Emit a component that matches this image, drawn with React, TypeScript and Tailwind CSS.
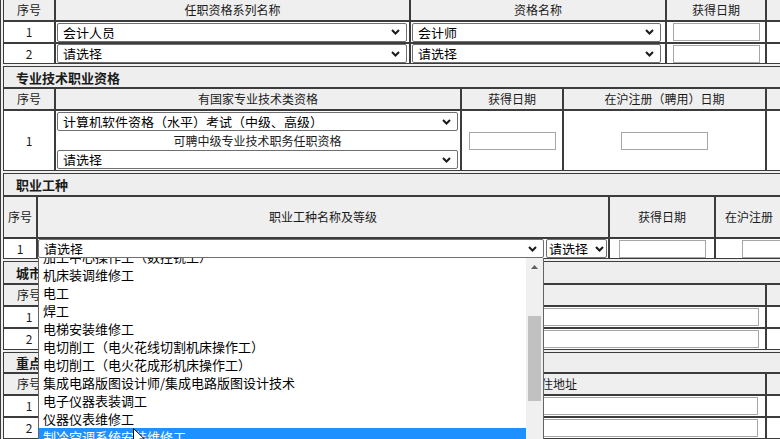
import type { ReactNode } from 'react'

const cell = 'shrink-0 flex items-center justify-center border border-[#3c3c3c] leading-none'
const head = 'bg-[#efefef] text-[12px] text-[#1a1a1a]'
const data = 'bg-white text-[12px] text-[#1a1a1a]'
const title = 'shrink-0 flex items-center justify-start border border-[#3c3c3c] bg-[#eeeeee] pl-[12px] text-[13px] font-bold text-[#1a1a1a] leading-none'

const ITEMS = [
  '加工中心操作工（数控铣工）',
  '机床装调维修工',
  '电工',
  '焊工',
  '电梯安装维修工',
  '电切削工（电火花线切割机床操作工）',
  '电切削工（电火花成形机床操作工）',
  '集成电路版图设计师/集成电路版图设计技术',
  '电子仪器表装调工',
  '仪器仪表维修工',
  '制冷空调系统安装维修工',
  '计算机维修工',
]
const SELECTED = 10

function Chevron() {
  return (
    <svg width="9" height="6" viewBox="0 0 9 6" className="shrink-0">
      <polyline points="1,1 4.5,4.5 8,1" fill="none" stroke="#1a1a1a" strokeWidth="2" />
    </svg>
  )
}

interface SelectProps {
  readonly label: string
  readonly className: string
}

function Select({ label, className }: SelectProps) {
  return (
    <div
      className={`flex h-[19px] shrink-0 items-center justify-between rounded-[2px] border border-[#6f6f6f] bg-white text-[13px] text-black ${className}`}
    >
      <span className="truncate leading-none">{label}</span>
      <Chevron />
    </div>
  )
}

function Input({ className }: { readonly className: string }) {
  return <div className={`h-[18px] shrink-0 border border-[#a6a6a6] bg-white ${className}`} />
}

function Row({ children, className = '' }: { readonly children: ReactNode; readonly className?: string }) {
  return <div className={`flex w-[877px] ${className}`}>{children}</div>
}

export default function App() {
  return (
    <div className="relative h-[439px] w-[780px] overflow-hidden border-l border-[#3c3c3c] bg-[#f0f0f0] pl-[2px] font-['Noto_Sans_CJK_SC','Noto_Sans',sans-serif] [text-spacing-trim:space-all]">
      {/* 任职资格 */}
      <div className="-mt-px">
        <Row>
          <div className={`${cell} ${head} h-[22px] w-[52px]`}>序号</div>
          <div className={`${cell} ${head} h-[22px] w-[355px]`}>任职资格系列名称</div>
          <div className={`${cell} ${head} h-[22px] w-[256px]`}>资格名称</div>
          <div className={`${cell} ${head} h-[22px] w-[100px]`}>获得日期</div>
          <div className={`${cell} ${head} h-[22px] w-[114px]`} />
        </Row>
        <Row>
          <div className={`${cell} ${data} h-[22px] w-[52px]`}>1</div>
          <div className={`${cell} ${data} h-[22px] w-[355px] !justify-start pl-[1px]`}>
            <Select label="会计人员" className="w-[350px] pl-[5px] pr-[6px]" />
          </div>
          <div className={`${cell} ${data} h-[22px] w-[256px] !justify-start pl-[1px]`}>
            <Select label="会计师" className="w-[249px] pl-[5px] pr-[6px]" />
          </div>
          <div className={`${cell} ${data} h-[22px] w-[100px]`}>
            <Input className="w-[87px]" />
          </div>
          <div className={`${cell} ${data} h-[22px] w-[114px]`} />
        </Row>
        <Row>
          <div className={`${cell} ${data} h-[21px] w-[52px]`}>2</div>
          <div className={`${cell} ${data} h-[21px] w-[355px] !justify-start pl-[1px]`}>
            <Select label="请选择" className="w-[350px] pl-[5px] pr-[6px]" />
          </div>
          <div className={`${cell} ${data} h-[21px] w-[256px] !justify-start pl-[1px]`}>
            <Select label="请选择" className="w-[249px] pl-[5px] pr-[6px]" />
          </div>
          <div className={`${cell} ${data} h-[21px] w-[100px]`}>
            <Input className="w-[87px]" />
          </div>
          <div className={`${cell} ${data} h-[21px] w-[114px]`} />
        </Row>
      </div>

      {/* 专业技术职业资格 */}
      <div className="mt-[2px]">
        <Row>
          <div className={`${title} h-[22px] w-[877px]`}>专业技术职业资格</div>
        </Row>
        <Row>
          <div className={`${cell} ${head} h-[22px] w-[52px]`}>序号</div>
          <div className={`${cell} ${head} h-[22px] w-[406px]`}>有国家专业技术类资格</div>
          <div className={`${cell} ${head} h-[22px] w-[102px]`}>获得日期</div>
          <div className={`${cell} ${head} h-[22px] w-[203px]`}>在沪注册（聘用）日期</div>
          <div className={`${cell} ${head} h-[22px] w-[114px]`} />
        </Row>
        <Row>
          <div className={`${cell} ${data} h-[61px] w-[52px]`}>1</div>
          <div className={`${cell} ${data} h-[61px] w-[406px] !flex-col !items-start !justify-start pl-[1px] pt-[1px]`}>
            <Select label="计算机软件资格（水平）考试（中级、高级）" className="w-[401px] pl-[5px] pr-[6px]" />
            <div className="flex h-[19px] w-[401px] items-center justify-center">可聘中级专业技术职务任职资格</div>
            <Select label="请选择" className="w-[401px] pl-[5px] pr-[6px]" />
          </div>
          <div className={`${cell} ${data} h-[61px] w-[102px]`}>
            <Input className="w-[87px]" />
          </div>
          <div className={`${cell} ${data} h-[61px] w-[203px]`}>
            <Input className="w-[87px]" />
          </div>
          <div className={`${cell} ${data} h-[61px] w-[114px]`} />
        </Row>
      </div>

      {/* 职业工种 */}
      <div className="mt-[2px]">
        <Row>
          <div className={`${title} h-[23px] w-[877px]`}>职业工种</div>
        </Row>
        <Row>
          <div className={`${cell} ${head} h-[42px] w-[34px]`}>序号</div>
          <div className={`${cell} ${head} h-[42px] w-[572px]`}>职业工种名称及等级</div>
          <div className={`${cell} ${head} h-[42px] w-[106px]`}>获得日期</div>
          <div className={`${cell} ${head} h-[42px] w-[140px] whitespace-nowrap`}>在沪注册（聘用）日期</div>
          <div className={`${cell} ${head} h-[42px] w-[25px]`} />
        </Row>
        <Row>
          <div className={`${cell} ${data} h-[21px] w-[34px]`}>1</div>
          <div className={`${cell} ${data} h-[21px] w-[572px] !justify-start gap-[2px]`}>
            <Select label="请选择" className="w-[506px] pl-[5px] pr-[6px]" />
            <Select label="请选择" className="w-[61px] pl-[2px] pr-[2px]" />
          </div>
          <div className={`${cell} ${data} h-[21px] w-[106px]`}>
            <Input className="w-[87px]" />
          </div>
          <div className={`${cell} ${data} h-[21px] w-[140px]`}>
            <Input className="w-[87px]" />
          </div>
          <div className={`${cell} ${data} h-[21px] w-[25px]`} />
        </Row>
      </div>

      {/* 城市 */}
      <div className="mt-[2px]">
        <Row>
          <div className={`${title} h-[23px] w-[877px]`}>城市</div>
        </Row>
        <Row>
          <div className={`${cell} ${head} h-[22px] w-[52px]`}>序号</div>
          <div className={`${cell} ${head} h-[22px] w-[711px]`}>城市名称</div>
          <div className={`${cell} ${head} h-[22px] w-[114px]`} />
        </Row>
        {['1', '2'].map((n) => (
          <Row key={n}>
            <div className={`${cell} ${data} h-[22px] w-[52px]`}>{n}</div>
            <div className={`${cell} ${data} h-[22px] w-[405px]`} />
            <div className={`${cell} ${data} h-[22px] w-[306px] !justify-end pr-[6px]`}>
              <Input className="w-[291px]" />
            </div>
            <div className={`${cell} ${data} h-[22px] w-[114px]`} />
          </Row>
        ))}
      </div>

      {/* 重点 */}
      <div className="mt-[2px]">
        <Row>
          <div className={`${title} h-[21px] w-[877px]`}>重点联系人</div>
        </Row>
        <Row>
          <div className={`${cell} ${head} h-[22px] w-[52px]`}>序号</div>
          <div className={`${cell} ${head} h-[22px] w-[285px]`}>姓名</div>
          <div className={`${cell} ${head} h-[22px] w-[426px]`}>居住地址</div>
          <div className={`${cell} ${head} h-[22px] w-[114px]`} />
        </Row>
        {['1', '2'].map((n) => (
          <Row key={n}>
            <div className={`${cell} ${data} h-[22px] w-[52px]`}>{n}</div>
            <div className={`${cell} ${data} h-[22px] w-[285px]`} />
            <div className={`${cell} ${data} h-[22px] w-[426px]`}>
              <Input className="w-[410px]" />
            </div>
            <div className={`${cell} ${data} h-[22px] w-[114px]`} />
          </Row>
        ))}
      </div>

      {/* Open dropdown list */}
      <div className="absolute left-[37px] top-[258px] flex h-[190px] w-[506px] border-x border-[#646464] bg-white">
        <div className="w-[487px] overflow-hidden">
          <div className="-mt-[10px]">
            {ITEMS.map((item, i) => (
              <div
                key={item}
                className={
                  i === SELECTED
                    ? 'h-[18px] whitespace-nowrap bg-[#1e90ff] pl-[4px] text-[13px] leading-[18px] text-white'
                    : 'h-[18px] whitespace-nowrap pl-[4px] text-[13px] leading-[18px] text-black'
                }
              >
                {item}
              </div>
            ))}
          </div>
        </div>
        <div className="flex w-[17px] flex-col items-center bg-[#f0f0f0]">
          <div className="flex h-[17px] items-center justify-center">
            <svg width="7" height="4" viewBox="0 0 7 4">
              <polygon points="0,4 3.5,0 7,4" fill="#606060" />
            </svg>
          </div>
          <div className="mt-[41px] h-[85px] w-[13px] bg-[#c1c1c1]" />
        </div>
      </div>

      {/* Mouse pointer */}
      <svg width="13" height="20" viewBox="0 0 13 20" className="absolute left-[132px] top-[428px]">
        <path d="M0.5 0.5 L0.5 15.5 L4 12 L6.5 18 L9 17 L6.5 11 L11.5 11 Z" fill="white" stroke="black" strokeWidth="1" />
      </svg>
    </div>
  )
}
